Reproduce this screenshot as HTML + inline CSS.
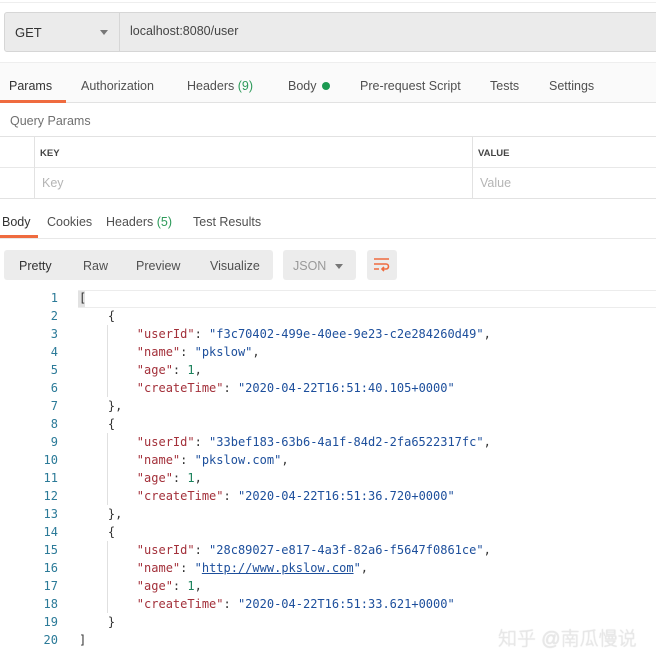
<!DOCTYPE html>
<html><head><meta charset="utf-8"><style>
*{margin:0;padding:0;box-sizing:border-box}
body{width:656px;height:665px;background:#fff;font-family:"Liberation Sans",sans-serif;font-size:12.5px;color:#505050;position:relative;overflow:hidden}
.a{position:absolute}
.t{position:absolute;white-space:nowrap}
.code{position:absolute;left:0;top:289px;font-family:"DejaVu Sans Mono","Liberation Mono",monospace;font-size:12px;}
.ln{position:absolute;left:0;width:58px;text-align:right;color:#2b7a98;height:18px;line-height:18px}
.cl{position:absolute;left:79px;height:18px;line-height:18px;white-space:pre;color:#333}
.k{color:#a3303a}.s{color:#1d4f9c}.n{color:#19805a}
.g{position:absolute;width:1px;background:#e0e0e0}
</style></head><body>
<div class="a" style="left:0;top:0;width:656px;height:3px;border-bottom:1px solid #eee"></div>
<div class="a" style="left:4px;top:12px;width:660px;height:40px;background:#ebebeb;border:1px solid #d6d6d6;border-radius:3px"></div>
<div class="a" style="left:119px;top:13px;width:1px;height:38px;background:#d6d6d6"></div>
<div class="t" style="left:15px;top:25px;color:#333;font-size:13px">GET</div>
<div class="a" style="left:100px;top:30px;border-left:4px solid transparent;border-right:4px solid transparent;border-top:5px solid #777"></div>
<div class="t" style="left:130px;top:24px;color:#444;font-size:12.5px">localhost:8080/user</div>

<div class="a" style="left:0;top:62px;width:656px;height:41px;background:#fafafa;border-top:1px solid #eee;border-bottom:1px solid #e2e2e2"></div>
<div class="t" style="left:9px;top:79px;color:#333">Params</div>
<div class="a" style="left:0;top:100px;width:66px;height:3px;background:#ef6b3f"></div>
<div class="t" style="left:81px;top:79px">Authorization</div>
<div class="t" style="left:187px;top:79px">Headers <span style="color:#2d9a5a">(9)</span></div>
<div class="t" style="left:288px;top:79px">Body <span style="display:inline-block;width:8px;height:8px;border-radius:50%;background:#1c9a52;margin-left:2px"></span></div>
<div class="t" style="left:360px;top:79px">Pre-request Script</div>
<div class="t" style="left:490px;top:79px">Tests</div>
<div class="t" style="left:549px;top:79px">Settings</div>

<div class="t" style="left:10px;top:114px;color:#707070">Query Params</div>
<div class="a" style="left:0;top:136px;width:656px;height:1px;background:#e2e2e2"></div>
<div class="a" style="left:0;top:167px;width:656px;height:1px;background:#e8e8e8"></div>
<div class="a" style="left:0;top:198px;width:656px;height:1px;background:#e2e2e2"></div>
<div class="a" style="left:34px;top:136px;width:1px;height:62px;background:#e2e2e2"></div>
<div class="a" style="left:472px;top:136px;width:1px;height:62px;background:#e2e2e2"></div>
<div class="t" style="left:40px;top:148px;font-size:9.5px;font-weight:bold;color:#444">KEY</div>
<div class="t" style="left:478px;top:148px;font-size:9.5px;font-weight:bold;color:#444">VALUE</div>
<div class="t" style="left:42px;top:176px;color:#b5b5b5">Key</div>
<div class="t" style="left:480px;top:176px;color:#b5b5b5">Value</div>

<div class="t" style="left:2px;top:215px;color:#333">Body</div>
<div class="t" style="left:47px;top:215px">Cookies</div>
<div class="t" style="left:106px;top:215px">Headers <span style="color:#2d9a5a">(5)</span></div>
<div class="t" style="left:193px;top:215px">Test Results</div>
<div class="a" style="left:0;top:235px;width:38px;height:3px;background:#ef6b3f"></div>
<div class="a" style="left:0;top:238px;width:656px;height:1px;background:#e8e8e8"></div>

<div class="a" style="left:4px;top:250px;width:269px;height:30px;background:#ececec;border-radius:3px"></div>
<div class="t" style="left:19px;top:259px;color:#333">Pretty</div>
<div class="t" style="left:83px;top:259px">Raw</div>
<div class="t" style="left:136px;top:259px">Preview</div>
<div class="t" style="left:210px;top:259px">Visualize</div>
<div class="a" style="left:283px;top:250px;width:73px;height:30px;background:#ececec;border-radius:3px"></div>
<div class="t" style="left:293px;top:259px;color:#999">JSON</div>
<div class="a" style="left:335px;top:264px;border-left:4px solid transparent;border-right:4px solid transparent;border-top:5px solid #777"></div>
<div class="a" style="left:367px;top:250px;width:30px;height:30px;background:#ececec;border-radius:3px"></div>
<svg class="a" style="left:373px;top:256px" width="18" height="18" viewBox="0 0 18 18"><g stroke="#ef6b3f" stroke-width="1.6" fill="none"><path d="M1 3H16M1 8H13a2.5 2.5 0 0 1 0 5H9M11 11l-2 2 2 2M1 13H6"/></g></svg>

<div class="a" style="left:78px;top:290px;width:580px;height:18px;border:1px solid #ececec"></div>
<div class="a" style="left:78px;top:291px;width:7px;height:16px;background:#e2e2e2"></div>
<div class="g" style="left:107px;top:325px;height:72px"></div>
<div class="g" style="left:107px;top:433px;height:72px"></div>
<div class="g" style="left:107px;top:541px;height:72px"></div>
<div class="code">
<div class="ln" style="top:0">1</div><div class="cl" style="top:0">[</div>
<div class="ln" style="top:18px">2</div><div class="cl" style="top:18px">    {</div>
<div class="ln" style="top:36px">3</div><div class="cl" style="top:36px">        <span class="k">"userId"</span>: <span class="s">"f3c70402-499e-40ee-9e23-c2e284260d49"</span>,</div>
<div class="ln" style="top:54px">4</div><div class="cl" style="top:54px">        <span class="k">"name"</span>: <span class="s">"pkslow"</span>,</div>
<div class="ln" style="top:72px">5</div><div class="cl" style="top:72px">        <span class="k">"age"</span>: <span class="n">1</span>,</div>
<div class="ln" style="top:90px">6</div><div class="cl" style="top:90px">        <span class="k">"createTime"</span>: <span class="s">"2020-04-22T16:51:40.105+0000"</span></div>
<div class="ln" style="top:108px">7</div><div class="cl" style="top:108px">    },</div>
<div class="ln" style="top:126px">8</div><div class="cl" style="top:126px">    {</div>
<div class="ln" style="top:144px">9</div><div class="cl" style="top:144px">        <span class="k">"userId"</span>: <span class="s">"33bef183-63b6-4a1f-84d2-2fa6522317fc"</span>,</div>
<div class="ln" style="top:162px">10</div><div class="cl" style="top:162px">        <span class="k">"name"</span>: <span class="s">"pkslow.com"</span>,</div>
<div class="ln" style="top:180px">11</div><div class="cl" style="top:180px">        <span class="k">"age"</span>: <span class="n">1</span>,</div>
<div class="ln" style="top:198px">12</div><div class="cl" style="top:198px">        <span class="k">"createTime"</span>: <span class="s">"2020-04-22T16:51:36.720+0000"</span></div>
<div class="ln" style="top:216px">13</div><div class="cl" style="top:216px">    },</div>
<div class="ln" style="top:234px">14</div><div class="cl" style="top:234px">    {</div>
<div class="ln" style="top:252px">15</div><div class="cl" style="top:252px">        <span class="k">"userId"</span>: <span class="s">"28c89027-e817-4a3f-82a6-f5647f0861ce"</span>,</div>
<div class="ln" style="top:270px">16</div><div class="cl" style="top:270px">        <span class="k">"name"</span>: <span class="s">"<u>http://www.pkslow.com</u>"</span>,</div>
<div class="ln" style="top:288px">17</div><div class="cl" style="top:288px">        <span class="k">"age"</span>: <span class="n">1</span>,</div>
<div class="ln" style="top:306px">18</div><div class="cl" style="top:306px">        <span class="k">"createTime"</span>: <span class="s">"2020-04-22T16:51:33.621+0000"</span></div>
<div class="ln" style="top:324px">19</div><div class="cl" style="top:324px">    }</div>
<div class="ln" style="top:342px">20</div><div class="cl" style="top:342px">]</div>
</div>
<div class="t" style="left:498px;top:624px;font-family:'Liberation Sans','Noto Sans CJK SC',sans-serif;font-weight:300;font-size:19px;color:#e8e8e8;text-shadow:0 0 1px #ccc">知乎 @南瓜慢说</div>
</body></html>
